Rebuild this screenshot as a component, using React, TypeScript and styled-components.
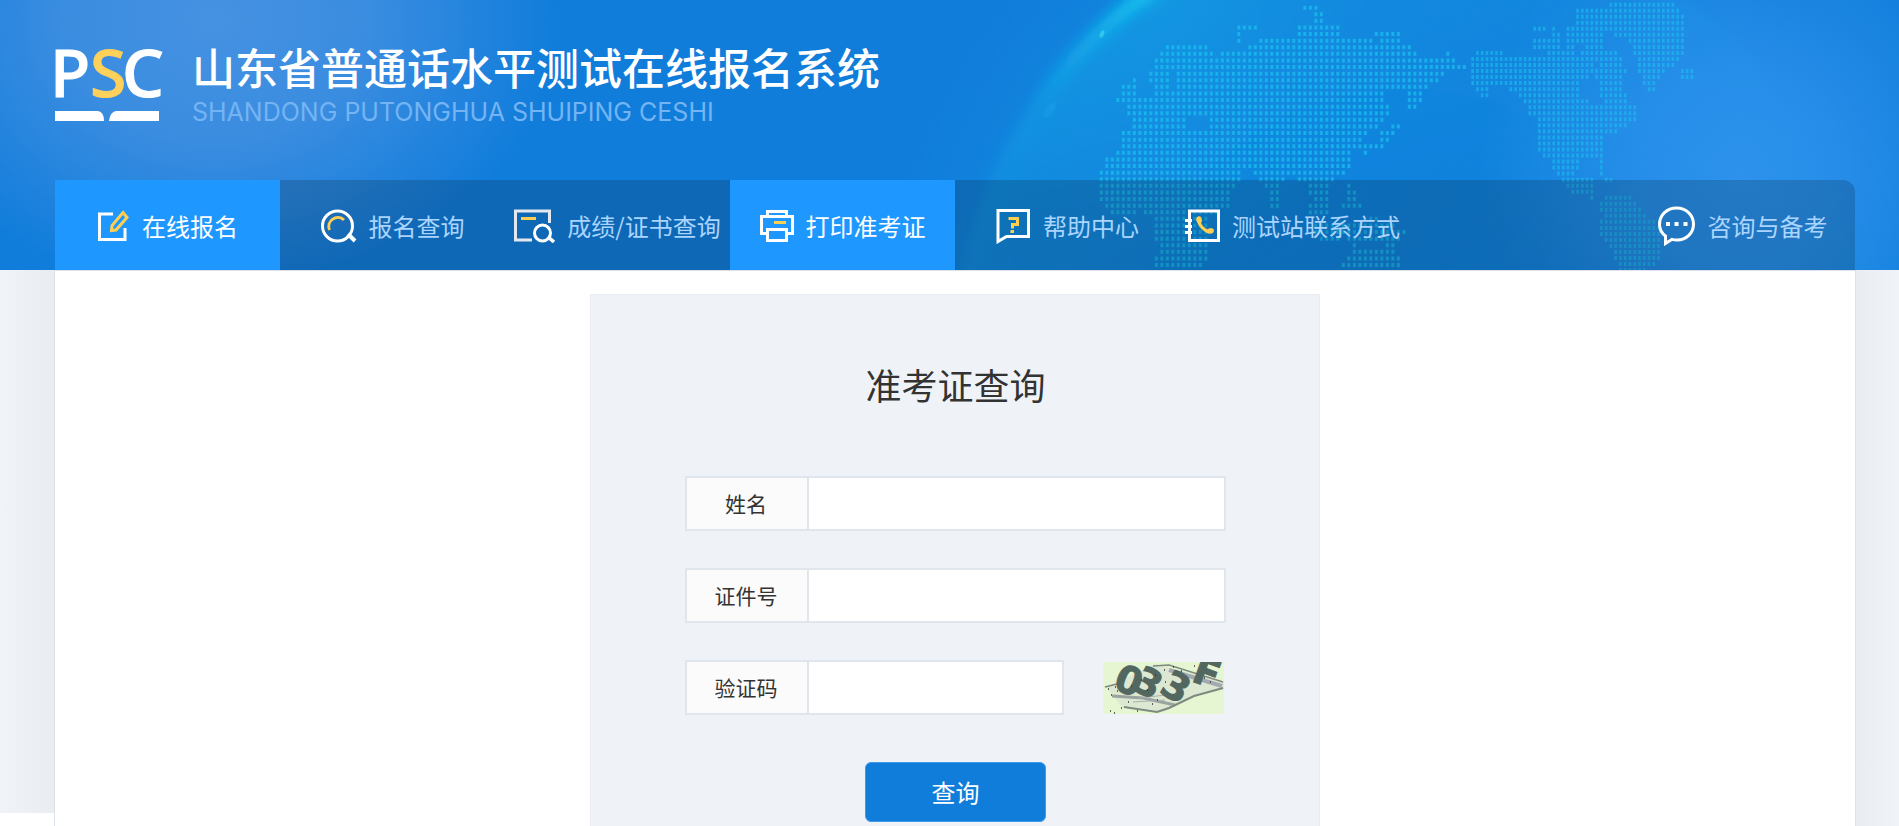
import React from "react";
import styled, { createGlobalStyle } from "styled-components";

type Point = [number, number];

const GlobalStyle = createGlobalStyle`
  *, *::before, *::after { box-sizing: border-box; }
  body {
    margin: 0;
    background: #fff;
    color: #333;
    font-family: "Noto Sans CJK SC", "Liberation Sans", sans-serif;
  }
`;

const Page = styled.div`
  min-height: 100vh;
  overflow: hidden;
`;

const Header = styled.header`
  position: relative;
  height: 270px;
  padding: 0 44px 0 55px;
  display: flex;
  flex-direction: column;
  background:
    radial-gradient(ellipse 340px 270px at 215px 20px, rgba(72, 146, 226, 0.95), rgba(72, 146, 226, 0.75) 45%, rgba(17, 125, 219, 0) 100%),
    #117ddb;
`;

const HeaderArt = styled.svg`
  position: absolute;
  inset: 0;
  width: 100%;
  height: 100%;
`;

const Brand = styled.div`
  position: relative;
  flex: 1;
  display: flex;
  align-items: flex-start;
  gap: 33px;
  padding-top: 40px;
`;

const Logo = styled.svg`
  width: 104px;
  height: 80px;
  margin-top: 4px;
  flex: none;
  overflow: visible;
`;

const BrandText = styled.div`
  color: #fff;
`;

const SiteName = styled.h1`
  margin: 0 0 4px;
  font-size: 43px;
  line-height: 52px;
  font-weight: 500;
`;

const SiteNameLatin = styled.p`
  margin: 0;
  font-family: Inter, "Liberation Sans", sans-serif;
  font-weight: 400;
  font-size: 25px;
  line-height: 32px;
  color: #74b4f3;
`;

const Nav = styled.nav`
  position: relative;
  display: flex;
  height: 90px;
  background: rgba(0, 0, 0, 0.17);
  border-radius: 0 12px 0 0;
`;

const NavItem = styled.a<{ $active?: boolean; $end?: boolean }>`
  flex: 0 0 12.5%;
  margin-left: ${(p) => (p.$end ? "auto" : "0")};
  padding-top: 2px;
  display: flex;
  align-items: center;
  justify-content: center;
  gap: 12px;
  font-size: 24px;
  line-height: 36px;
  white-space: nowrap;
  text-decoration: none;
  color: ${(p) => (p.$active ? "#fff" : "#a9d5ff")};
  background: ${(p) => (p.$active ? "#1e98ff" : "transparent")};
`;

const NavIcon = styled.svg`
  flex: none;
  fill: none;
  stroke: #fff;
  stroke-width: 3;
`;

const Sides = styled.div`
  padding: 0 43px 0 54px;
  background:
    linear-gradient(to right, #f0f3f8, #e9edf2) left top / 54px 543px no-repeat,
    linear-gradient(to left, #f0f3f8, #e9edf2) right top / 43px 100% no-repeat;
`;

const Content = styled.main`
  padding: 23px 0 0;
  border: solid #dbe2ec;
  border-width: 1px 1px 0;
  background: #fff;
`;

const Panel = styled.form`
  width: 730px;
  margin: 0 auto;
  padding: 0 93px 80px 94px;
  border: 1px solid #e9edf3;
  background: #eff3f8;
  display: flex;
  flex-direction: column;
`;

const PanelTitle = styled.h2`
  margin: 62px 0 0;
  font-size: 36px;
  line-height: 54px;
  font-weight: 400;
  text-align: center;
`;

const Fields = styled.div`
  margin-top: 65px;
  display: flex;
  flex-direction: column;
  gap: 37px;
`;

const Row = styled.div`
  display: flex;
  align-items: center;
  justify-content: space-between;
`;

const Field = styled.div<{ $short?: boolean }>`
  display: flex;
  width: ${(p) => (p.$short ? "379px" : "100%")};
  height: 55px;
  border: 2px solid #e1e6ed;
  background: #fff;
`;

const FieldLabel = styled.label`
  flex: 0 0 122px;
  display: flex;
  align-items: center;
  justify-content: center;
  padding: 0 2px 2px 0;
  border-right: 2px solid #e1e6ed;
  background: #fbfbfb;
  font-size: 21px;
  line-height: 30px;
`;

const FieldInput = styled.input`
  flex: 1;
  min-width: 0;
  padding: 0 12px;
  border: 0;
  outline: 0;
  background: transparent;
  font: inherit;
  font-size: 21px;
`;

const CaptchaButton = styled.button`
  display: block;
  width: 121px;
  height: 52px;
  margin-right: 2px;
  padding: 0;
  border: 0;
  background: #e6f5d2;
  cursor: pointer;
`;

const Submit = styled.button`
  align-self: center;
  width: 181px;
  height: 60px;
  margin-top: 47px;
  border: 1px solid #3f9bea;
  border-radius: 6px;
  background: #117ddb;
  color: #fff;
  font: inherit;
  font-size: 24px;
  line-height: 36px;
  cursor: pointer;
`;

/* Land outlines, in thirds of a pixel measured from the map's left edge. */
const eurasia: Point[] = [
  [1080, 12], [1125, 15], [1160, 40], [1155, 74], [1205, 80], [1208, 112], [1290, 118], [1312, 130], [1300, 85], [1345, 85], [1350, 98],
  [1378, 100], [1380, 138], [1420, 142], [1430, 162], [1515, 162], [1515, 146], [1545, 148], [1532, 178], [1560, 185], [1562, 200],
  [1592, 202], [1592, 216], [1515, 220], [1510, 236], [1480, 250], [1455, 268], [1440, 308], [1420, 326], [1408, 320], [1408, 268], [1330, 268],
  [1345, 320], [1340, 362], [1300, 392], [1270, 405], [1260, 440], [1235, 450], [1232, 505], [1215, 530], [1165, 545], [1168, 600],
  [1160, 645], [1095, 645], [1118, 590], [1095, 555], [1050, 528], [1022, 560], [1022, 622], [995, 620], [985, 570], [945, 525],
  [935, 505], [905, 510], [905, 540], [885, 560], [862, 622], [812, 650], [804, 700], [806, 780], [775, 806], [650, 806], [636, 775],
  [655, 750], [636, 660], [600, 625], [580, 645], [512, 645], [492, 610], [478, 600], [478, 510], [500, 468], [540, 455], [552, 430], [535, 415],
  [536, 388], [575, 385], [568, 345], [552, 335], [556, 305], [520, 300], [520, 288], [540, 288], [536, 248], [570, 242], [570, 228],
  [586, 228], [588, 285], [640, 288], [650, 250], [625, 240], [628, 210], [660, 150], [680, 134], [792, 134], [815, 155], [818, 172],
  [848, 158], [850, 140], [862, 142], [864, 156], [915, 156], [918, 142], [955, 125], [965, 106], [1065, 108], [1066, 72], [1130, 70],
  [1118, 50], [1110, 30], [1082, 28],
];

const eastIslands: Point[][] = [
  [[885, 85], [902, 64], [965, 66], [960, 82], [928, 98], [900, 98], [898, 138], [884, 138]],
  [[1365, 362], [1380, 376], [1352, 415], [1335, 452], [1290, 456], [1284, 472], [1256, 448], [1262, 436], [1318, 438], [1318, 385], [1345, 385]],
  [[1222, 545], [1240, 560], [1264, 620], [1240, 625], [1195, 640], [1200, 610], [1222, 605]],
  [[1100, 655], [1165, 668], [1230, 672], [1300, 650], [1395, 690], [1370, 742], [1335, 742], [1300, 715], [1240, 745], [1215, 715], [1140, 720], [1120, 690]],
  [[1186, 806], [1205, 780], [1250, 745], [1300, 735], [1360, 742], [1380, 775], [1380, 812], [1186, 812]],
];

const eastGaps: Point[][] = [
  [[742, 350], [795, 350], [812, 390], [742, 390]],
  [[698, 212], [712, 212], [706, 262], [694, 262]],
];

const americas: Point[][] = [
  [
    [1594, 165], [1606, 148], [1692, 150], [1700, 172], [1880, 174], [1815, 170], [1812, 155], [1880, 158], [1880, 72], [1908, 70],
    [1908, 36], [1924, 20], [2004, 22], [2006, 6], [2192, 6], [2234, 45], [2236, 150], [2222, 188], [2172, 212], [2146, 270], [2118, 270],
    [2092, 215], [2090, 180], [2078, 155], [2062, 112], [2020, 106], [1990, 90], [1992, 142], [2022, 148], [2048, 180], [2062, 212],
    [2048, 250], [2062, 304], [2092, 308], [2092, 358], [2052, 388], [2020, 406], [1994, 412], [1994, 480], [1984, 482], [1992, 520],
    [2026, 548], [1970, 530], [1970, 484], [1914, 484], [1912, 536], [1962, 536], [1966, 602], [1924, 585], [1880, 570], [1866, 545], [1842, 530], [1840, 484],
    [1808, 472], [1784, 436], [1784, 358], [1768, 340], [1766, 315], [1736, 290], [1706, 262], [1656, 258], [1636, 295], [1604, 275], [1594, 255],
  ],
  [[2212, 206], [2264, 206], [2266, 240], [2226, 240]],
  [[1782, 84], [1824, 84], [1824, 102], [1782, 102]],
  [[1838, 84], [1866, 104], [1868, 142], [1768, 154], [1782, 122], [1840, 122]],
  [[2000, 588], [2068, 588], [2110, 625], [2124, 650], [2148, 660], [2168, 690], [2166, 780], [2120, 812], [2030, 812], [2026, 765], [2000, 735], [1974, 690], [1990, 640], [1974, 612]],
];

const americaGaps: Point[][] = [
  [[1924, 235], [1965, 228], [1982, 250], [1984, 290], [1996, 315], [1966, 312], [1926, 285]],
  [[1912, 130], [1932, 130], [1925, 168], [1912, 168]],
  [[1966, 190], [1982, 190], [1990, 210], [1966, 210]],
];

const inside = (x: number, y: number, shape: Point[]) => {
  let hit = false;
  for (let i = 0, j = shape.length - 1; i < shape.length; j = i++) {
    const [xi, yi] = shape[i];
    const [xj, yj] = shape[j];
    if (yi > y !== yj > y && x < ((xj - xi) * (y - yi)) / (yj - yi) + xi) hit = !hit;
  }
  return hit;
};

const dots = (land: Point[][], gaps: Point[][], x0: number, x1: number, dx: number, y0: number, dy: number) => {
  let d = "";
  for (let y = y0; y < 812; y += dy) {
    for (let x = x0; x < x1; x += dx) {
      if (land.some((s) => inside(x, y, s)) && !gaps.some((s) => inside(x, y, s))) {
        d += `M${x.toFixed(1)} ${(y - 6).toFixed(1)}v12`;
      }
    }
  }
  return d;
};

const eastDots = dots([eurasia, ...eastIslands], eastGaps, 484, 1600, 16.5, 23, 19.8);
const westDots = dots(americas, americaGaps, 1598, 2300, 14.3, 14, 18.1);

const Globe = () => (
  <HeaderArt viewBox="0 0 1899 270" preserveAspectRatio="xMidYMid slice" aria-hidden="true">
    <defs>
      <radialGradient id="sphere" gradientUnits="userSpaceOnUse" cx="1409" cy="364" r="460">
        <stop offset="0.4" stopColor="#14a8e8" stopOpacity="0.1" />
        <stop offset="0.75" stopColor="#14a8e8" stopOpacity="0.4" />
        <stop offset="0.94" stopColor="#14aee8" stopOpacity="0.52" />
        <stop offset="1" stopColor="#14b8ee" stopOpacity="0.65" />
      </radialGradient>
      <radialGradient id="halo" gradientUnits="userSpaceOnUse" cx="1409" cy="364" r="540">
        <stop offset="0.84" stopColor="#14b4ee" stopOpacity="0.22" />
        <stop offset="1" stopColor="#14b4ee" stopOpacity="0" />
      </radialGradient>
      <radialGradient id="rim" gradientUnits="userSpaceOnUse" cx="1145" cy="-10" r="170">
        <stop offset="0" stopColor="#14d2f2" stopOpacity="0.95" />
        <stop offset="0.5" stopColor="#14c8f2" stopOpacity="0.4" />
        <stop offset="1" stopColor="#14c8f2" stopOpacity="0" />
      </radialGradient>
      <radialGradient id="fade" gradientUnits="userSpaceOnUse" cx="1160" cy="10" r="600">
        <stop offset="0" stopColor="#fff" stopOpacity="0.8" />
        <stop offset="0.4" stopColor="#fff" stopOpacity="0.45" />
        <stop offset="1" stopColor="#fff" stopOpacity="0.2" />
      </radialGradient>
      <radialGradient id="warm" gradientUnits="userSpaceOnUse" cx="1740" cy="170" r="260">
        <stop offset="0" stopColor="#3396f0" stopOpacity="0.8" />
        <stop offset="0.4" stopColor="#3396f0" stopOpacity="0.6" />
        <stop offset="1" stopColor="#3396f0" stopOpacity="0" />
      </radialGradient>
      <filter id="soft" x="-20%" y="-20%" width="140%" height="140%">
        <feGaussianBlur stdDeviation="7" />
      </filter>
      <mask id="fadeMask" maskUnits="userSpaceOnUse" x="800" y="-120" width="1100" height="500">
        <rect x="800" y="-120" width="1100" height="500" fill="url(#fade)" />
      </mask>
    </defs>
    <g mask="url(#fadeMask)">
      <circle cx="1409" cy="364" r="540" fill="url(#halo)" />
      <circle cx="1409" cy="364" r="458" fill="url(#sphere)" filter="url(#soft)" />
    </g>
    <circle cx="1409" cy="364" r="454" fill="none" stroke="url(#rim)" strokeWidth="12" filter="url(#soft)" />
    <rect x="1440" width="459" height="270" fill="url(#warm)" />
    <g transform="translate(940 0) scale(0.333333)" fill="none" stroke="#1cc4f0">
      <path d={eastDots} strokeWidth="9" strokeOpacity="0.66" />
      <path d={westDots} strokeWidth="8" strokeOpacity="0.54" />
    </g>
    <ellipse cx="1102" cy="34" rx="2" ry="4" fill="#3fdcf4" opacity="0.6" transform="rotate(20 1102 34)" />
    <ellipse cx="1050" cy="110" rx="4" ry="9" fill="#22b4f4" opacity="0.2" transform="rotate(35 1050 110)" />
  </HeaderArt>
);

const yellow = "#ffcf52";

const PencilIcon = () => (
  <NavIcon width="33" height="32" viewBox="0 0 33 32">
    <path d="M16 4H2.500V29.500H28V18" />
    <path d="M26 2.500L30 7.500L19 20L14.500 20.500L15 15.500Z" stroke={yellow} />
  </NavIcon>
);

const SearchIcon = () => (
  <NavIcon width="36" height="34" viewBox="0 0 36 34">
    <circle cx="16.500" cy="17" r="15" />
    <path d="M27 25L34 32" strokeWidth="4" />
    <path d="M8.500 21A9 9 0 0 1 23 11" stroke={yellow} />
  </NavIcon>
);

const RecordIcon = () => (
  <NavIcon width="41" height="34" viewBox="0 0 41 34">
    <path d="M18 31H1.500V2H35.500V14" stroke="#e4e8ee" />
    <path d="M7 9.500H22" stroke={yellow} />
    <circle cx="28.500" cy="24" r="8" />
    <path d="M34 28L40 33" strokeWidth="3.500" />
  </NavIcon>
);

const PrinterIcon = () => (
  <NavIcon width="34" height="34" viewBox="0 0 34 34">
    <path d="M7.500 7V2.500H26.500V7" />
    <path d="M7.500 24.500H1.500V7.500H32.500V24.500H26.500" />
    <path d="M7.500 20.500H26.500V31.500H7.500Z" />
    <path d="M14 13.500H26" stroke={yellow} />
  </NavIcon>
);

const HelpIcon = () => (
  <NavIcon width="35" height="36" viewBox="0 0 35 36">
    <path d="M2 2.500H32.500V28.500H10.500L2 33.500Z" />
    <path d="M12.500 10.500H21.500V16.500H16.500V20.500M14.500 23.500H18" stroke={yellow} />
  </NavIcon>
);

const PhoneBookIcon = () => (
  <NavIcon width="35" height="34" viewBox="0 0 35 34">
    <path d="M4.500 2H33.500V31.500H4.500Z" />
    <path d="M0 11.500H7M0 17.500H7M0 23.500H7" />
    <path
      d="M13 7.500C10.500 9 11 11 12 13C14 18 18 22.500 23.500 24.500C26 25.200 28 24.500 28.800 22.500C29.300 21 28.500 19.500 27 19.300C25.500 19 24 19 22.500 20.300C19.500 19 17.500 17 16 14C17.200 12.500 17 11 16.500 9.500C16 7.500 14.500 6.700 13 7.500Z"
      fill={yellow}
      stroke="none"
    />
  </NavIcon>
);

const ChatIcon = () => (
  <NavIcon width="38" height="40" viewBox="0 0 38 40">
    <path d="M7.500 30C3.500 27 1.500 23 1.500 18.500C1.500 9 9 2 18.500 2S35.500 9 35.500 18S28.500 34 19 34C17 34 15.500 33.800 14 33.300L7.500 37.500Z" />
    <path d="M8 18H12M16.500 18H20.500M25.500 18H29.500" strokeWidth="4" />
  </NavIcon>
);

const navItems = [
  { label: "在线报名", Icon: PencilIcon, active: true },
  { label: "报名查询", Icon: SearchIcon },
  { label: "成绩/证书查询", Icon: RecordIcon },
  { label: "打印准考证", Icon: PrinterIcon, active: true },
  { label: "帮助中心", Icon: HelpIcon },
  { label: "测试站联系方式", Icon: PhoneBookIcon },
  { label: "咨询与备考", Icon: ChatIcon, end: true },
];

const CaptchaArt = () => (
  <svg width="121" height="52" viewBox="0 0 121 52" role="img" aria-label="验证码图片">
    <path d="M3 25L52 2L121 20V27L92 34L60 50L20 46" fill="#d5dfd0" opacity="0.6" />
    <g fill="none" stroke="#7d8a80">
      <path d="M2 25L14 22M50 4L66 3L120 20" strokeWidth="1.500" />
      <path d="M66 8L119 24" stroke="#a3a9b0" strokeWidth="4" />
      <path d="M9 34L40 36L72 43" stroke="#9aa3a0" strokeWidth="3" />
      <path d="M21 45L54 50L66 46L91 34L120 26" strokeWidth="2" />
      <path d="M36 36L72 32M30 40L62 38" stroke="#a9b1ae" />
    </g>
    <g
      fontFamily="'DejaVu Sans', sans-serif"
      fontWeight="700"
      fontSize="38"
      textAnchor="middle"
      fill="#52675f"
      stroke="#52675f"
    >
      <text y="13" transform="translate(26 19) rotate(22)">0</text>
      <text y="13" transform="translate(45 21) rotate(28)">3</text>
      <text y="13" transform="translate(73 25) rotate(30)">3</text>
      <text y="13" transform="translate(104 11) rotate(20)">F</text>
    </g>
    <path
      d="M5 27h1M8 33h1M14 29h1M12 25h1M25 40h1M18 46h1M28 24h1M38 18h1M44 28h1M52 13h1M62 20h1M70 5h1M78 9h1M91 4h1M101 16h1M107 20h1M54 38h1M34 49h1M11 51h1M7 49h1M61 8h1M49 42h1"
      stroke="#333"
      strokeWidth="1.500"
    />
  </svg>
);

export default function App() {
  return (
    <Page>
      <GlobalStyle />
      <Header>
        <Globe />
        <Brand>
          <Logo viewBox="0 0 104 80" role="img" aria-label="PSC">
            <g fontFamily="'Noto Sans', sans-serif" fontWeight="500" fontSize="66" fill="#fff" stroke="#fff">
              <text x="-5" y="53">P</text>
              <text x="35" y="53" fill="#ffd05a" stroke="#ffd05a">S</text>
              <text x="67" y="53">C</text>
            </g>
            <path d="M0 67H43Q49 68 49 77H0Z" fill="#fff" />
            <path d="M104 67H61Q55 68 54 77H104Z" fill="#fff" />
          </Logo>
          <BrandText>
            <SiteName>山东省普通话水平测试在线报名系统</SiteName>
            <SiteNameLatin>SHANDONG PUTONGHUA SHUIPING CESHI</SiteNameLatin>
          </BrandText>
        </Brand>
        <Nav>
          {navItems.map(({ label, Icon, active, end }) => (
            <NavItem key={label} href="#" $active={active} $end={end}>
              <Icon />
              {label}
            </NavItem>
          ))}
        </Nav>
      </Header>
      <Sides>
        <Content>
          <Panel onSubmit={(e: React.FormEvent) => e.preventDefault()}>
            <PanelTitle>准考证查询</PanelTitle>
            <Fields>
              <Field>
                <FieldLabel htmlFor="name">姓名</FieldLabel>
                <FieldInput id="name" type="text" />
              </Field>
              <Field>
                <FieldLabel htmlFor="idNumber">证件号</FieldLabel>
                <FieldInput id="idNumber" type="text" />
              </Field>
              <Row>
                <Field $short>
                  <FieldLabel htmlFor="captcha">验证码</FieldLabel>
                  <FieldInput id="captcha" type="text" />
                </Field>
                <CaptchaButton type="button">
                  <CaptchaArt />
                </CaptchaButton>
              </Row>
            </Fields>
            <Submit type="submit">查询</Submit>
          </Panel>
        </Content>
      </Sides>
    </Page>
  );
}
